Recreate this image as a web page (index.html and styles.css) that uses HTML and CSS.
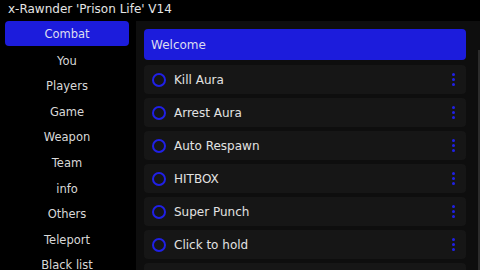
FILE: index.html
```html
<!DOCTYPE html>
<html>
<head>
<meta charset="utf-8">
<link rel="stylesheet" href="styles.css">
</head>
<body>
<div class="window">
  <div class="title">x-Rawnder 'Prison Life' V14</div>
  <div class="main">
    <div class="sidebar">
      <div class="tab active">Combat</div>
      <div class="tab">You</div>
      <div class="tab">Players</div>
      <div class="tab">Game</div>
      <div class="tab">Weapon</div>
      <div class="tab">Team</div>
      <div class="tab">info</div>
      <div class="tab">Others</div>
      <div class="tab">Teleport</div>
      <div class="tab">Black list</div>
    </div>
    <div class="content">
      <div class="welcome">Welcome</div>
      <div class="row"><span class="circle"></span><span class="label">Kill Aura</span><span class="dots"><i></i><i></i><i></i></span></div>
      <div class="row"><span class="circle"></span><span class="label">Arrest Aura</span><span class="dots"><i></i><i></i><i></i></span></div>
      <div class="row"><span class="circle"></span><span class="label">Auto Respawn</span><span class="dots"><i></i><i></i><i></i></span></div>
      <div class="row"><span class="circle"></span><span class="label">HITBOX</span><span class="dots"><i></i><i></i><i></i></span></div>
      <div class="row"><span class="circle"></span><span class="label">Super Punch</span><span class="dots"><i></i><i></i><i></i></span></div>
      <div class="row"><span class="circle"></span><span class="label">Click to hold</span><span class="dots"><i></i><i></i><i></i></span></div>
      <div class="row"><span class="circle"></span><span class="label"></span><span class="dots"><i></i><i></i><i></i></span></div>
      <div class="scrollthumb"></div>
    </div>
  </div>
</div>
</body>
</html>
```
FILE: styles.css
```css
html, body {
  margin: 0;
  padding: 0;
  background: #000;
}
.window {
  width: 480px;
  height: 270px;
  overflow: hidden;
  font-family: "DejaVu Sans", "Noto Sans", sans-serif;
  color: #dedede;
  background: #000;
}
.title {
  height: 21px;
  line-height: 18px;
  padding-left: 8px;
  font-size: 12px;
  color: #e4e4e4;
}
.main {
  display: flex;
  height: 249px;
}
.sidebar {
  width: 136px;
  flex: none;
  box-sizing: border-box;
  padding: 0 7px 0 5px;
  background: #000;
}
.tab {
  height: 25.6px;
  line-height: 28px;
  text-align: center;
  font-size: 11.5px;
  color: #d8d8d8;
}
.tab.active {
  height: 25px;
  line-height: 27px;
  margin-bottom: 0.6px;
  background: #1c1cdc;
  border-radius: 4px;
  color: #dcdcf0;
}
.content {
  position: relative;
  flex: 1;
  background: #0e0e0e;
  box-sizing: border-box;
  padding: 8px 14px 0 8px;
  display: flex;
  flex-direction: column;
  gap: 4px;
  overflow: hidden;
}
.welcome {
  flex: none;
  height: 31px;
  line-height: 32px;
  margin-bottom: 1px;
  background: #1c1cdc;
  border-radius: 4px;
  padding-left: 7px;
  font-size: 12px;
  color: #dcdcf0;
}
.row {
  flex: none;
  height: 29px;
  background: #161616;
  border-radius: 4px;
  display: flex;
  align-items: center;
  padding: 0 11px 0 8px;
}
.circle {
  width: 10px;
  height: 10px;
  border: 2px solid #2020e6;
  border-radius: 50%;
  flex: none;
}
.label {
  margin-left: 8px;
  flex: 1;
  font-size: 12px;
  line-height: 14px;
  padding-top: 1px;
  color: #e2e2e2;
}
.dots {
  display: flex;
  flex-direction: column;
  gap: 2px;
}
.dots i {
  display: block;
  width: 3px;
  height: 3px;
  border-radius: 50%;
  background: #2020e6;
}
.scrollthumb {
  position: absolute;
  right: 0;
  top: 29px;
  width: 2px;
  bottom: 0;
  background: #2c2c2c;
}
```
